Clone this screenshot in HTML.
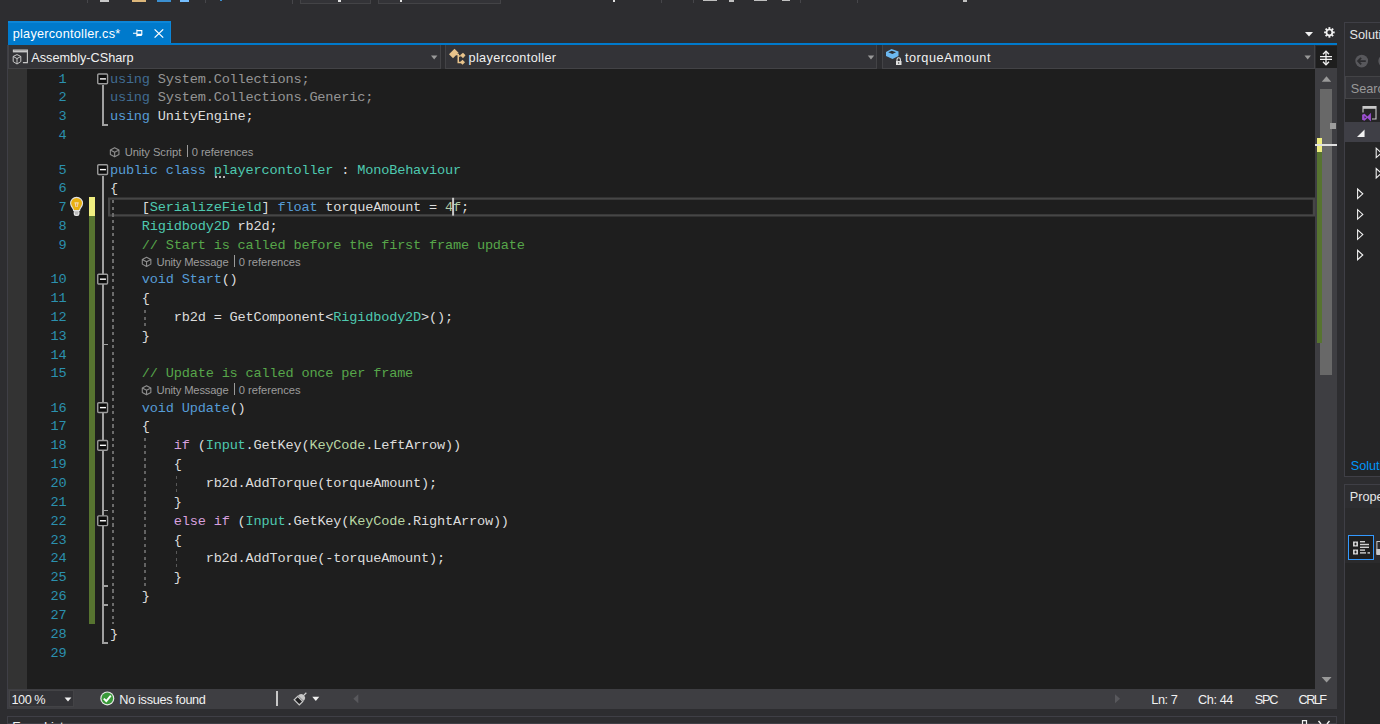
<!DOCTYPE html>
<html><head><meta charset="utf-8"><title>playercontoller.cs</title>
<style>
html,body{margin:0;padding:0;}
body{width:1380px;height:724px;overflow:hidden;background:#2d2d30;position:relative;font-family:"Liberation Sans",sans-serif;font-size:12px;color:#f1f1f1;}
.a{position:absolute;}
svg{overflow:visible}
.ui{position:absolute;white-space:nowrap;font-family:"Liberation Sans",sans-serif;line-height:16px;height:16px;}
.ln,.cl{position:absolute;white-space:pre;font-family:"Liberation Mono",monospace;font-size:13.6px;line-height:16px;height:16px;letter-spacing:-0.18px;}
.ln{color:#2b91af;text-align:right;left:27px;width:39.4px;}
.cl{color:#dcdcdc;left:109.95px;}
.k{color:#569cd6}.t{color:#4ec9b0}.g{color:#57a64a}.n{color:#b5cea8}.e{color:#b8d7a3}.c{color:#d8a0df}.u{color:#569cd6}
.box{position:absolute;width:9px;height:9px;border:1px solid #a5a5a5;background:#1e1e1e;}
.box:after{content:"";position:absolute;left:2px;top:4px;width:5px;height:1px;background:#f0f0f0;}
.gd{position:absolute;width:2px;background:repeating-linear-gradient(to bottom,var(--c) 0,var(--c) 3.3px,transparent 3.3px,transparent 6.6px);}
</style></head><body>

<div class="a" style="left:87px;top:0px;width:1px;height:3px;background:#46464a;"></div>
<div class="a" style="left:100px;top:0px;width:9px;height:1.5px;background:#c8c8c8;"></div>
<div class="a" style="left:132px;top:0px;width:14px;height:2px;background:#dcb67a;"></div>
<div class="a" style="left:157px;top:0px;width:14px;height:1.5px;background:#3b8fd0;"></div>
<div class="a" style="left:180px;top:0px;width:9px;height:2px;background:#75beff;"></div>
<div class="a" style="left:205px;top:0px;width:1px;height:3px;background:#46464a;"></div>
<div class="a" style="left:220px;top:0px;width:2px;height:1px;background:#3b8fd0;"></div>
<div class="a" style="left:292px;top:0px;width:1px;height:4px;background:#46464a;"></div>
<div class="a" style="left:299.5px;top:-1px;width:71px;height:5px;background:#333337;border:1px solid #434346;box-sizing:border-box"></div>
<div class="a" style="left:378px;top:-1px;width:122.5px;height:5px;background:#333337;border:1px solid #434346;box-sizing:border-box"></div>
<div class="a" style="left:338px;top:0px;width:3px;height:1.5px;background:#e0e0e0;"></div>
<div class="a" style="left:400px;top:0px;width:2px;height:1.5px;background:#e0e0e0;"></div>
<div class="a" style="left:613px;top:0px;width:2px;height:1.5px;background:#e0e0e0;"></div>
<div class="a" style="left:661px;top:0px;width:1px;height:3px;background:#46464a;"></div>
<div class="a" style="left:693px;top:0px;width:1px;height:3px;background:#46464a;"></div>
<div class="a" style="left:703px;top:0px;width:14px;height:1px;background:#c0c0c0;"></div>
<div class="a" style="left:729px;top:0px;width:5px;height:2px;background:#c0c0c0;"></div>
<div class="a" style="left:754px;top:0px;width:13px;height:1px;background:#c0c0c0;"></div>
<div class="a" style="left:782px;top:0px;width:8px;height:1px;background:#c0c0c0;"></div>
<div class="a" style="left:800px;top:0px;width:1px;height:3px;background:#46464a;"></div>
<div class="a" style="left:857px;top:0px;width:1px;height:3px;background:#46464a;"></div>
<div class="a" style="left:963px;top:0px;width:4px;height:2px;background:#c0c0c0;"></div>
<div class="a" style="left:8px;top:21px;width:163px;height:22px;background:#007acc;"></div>
<div class="a" style="left:8px;top:21px;width:163px;height:1.6px;background:#0c86d8;"></div>
<div class="a" style="left:170px;top:21px;width:1px;height:22px;background:#0c86d8;"></div>
<div class="ui" style="left:12.7px;top:26px;font-size:12.7px;letter-spacing:0.255px;color:#ffffff;">playercontoller.cs*</div>
<svg class="a" style="left:133px;top:29px;" width="10" height="9" viewBox="0 0 10 9"><path d="M0 4.3H3.8 M3.9 0.6V7.6 M3.9 1.6H8.8V6.1 M3.9 5.3H8.8 M3.9 6.4H8.8" fill="none" stroke="#fff" stroke-width="1.1"/></svg>
<svg class="a" style="left:154px;top:29px;" width="10" height="9" viewBox="0 0 10 9"><path d="M0.6 0.4L9.2 8.6M9.2 0.4L0.6 8.6" fill="none" stroke="#fff" stroke-width="1.3"/></svg>
<svg class="a" style="left:1305px;top:32px;" width="8" height="5" viewBox="0 0 8 5"><path d="M0 0H8L4 4.6Z" fill="#f1f1f1"/></svg>
<svg class="a" style="left:1324px;top:27px;" width="10.8" height="10.8" viewBox="-5.4 -5.4 10.8 10.8"><circle r="2.9" fill="none" stroke="#f1f1f1" stroke-width="1.7"/><path d="M0 -3.4V-5.3" stroke="#f1f1f1" stroke-width="1.9" transform="rotate(0)"/><path d="M0 -3.4V-5.3" stroke="#f1f1f1" stroke-width="1.9" transform="rotate(45)"/><path d="M0 -3.4V-5.3" stroke="#f1f1f1" stroke-width="1.9" transform="rotate(90)"/><path d="M0 -3.4V-5.3" stroke="#f1f1f1" stroke-width="1.9" transform="rotate(135)"/><path d="M0 -3.4V-5.3" stroke="#f1f1f1" stroke-width="1.9" transform="rotate(180)"/><path d="M0 -3.4V-5.3" stroke="#f1f1f1" stroke-width="1.9" transform="rotate(225)"/><path d="M0 -3.4V-5.3" stroke="#f1f1f1" stroke-width="1.9" transform="rotate(270)"/><path d="M0 -3.4V-5.3" stroke="#f1f1f1" stroke-width="1.9" transform="rotate(315)"/></svg>
<div class="a" style="left:8px;top:43px;width:1329px;height:2px;background:#007acc;"></div>
<div class="a" style="left:8px;top:45px;width:433px;height:23.5px;background:#333337;border:1px solid #434346;border-top:none;box-sizing:border-box"></div>
<div class="a" style="left:445px;top:45px;width:432px;height:23.5px;background:#333337;border:1px solid #434346;border-top:none;box-sizing:border-box"></div>
<div class="a" style="left:881.5px;top:45px;width:433.5px;height:23.5px;background:#333337;border:1px solid #434346;border-top:none;box-sizing:border-box"></div>
<div class="ui" style="left:31.3px;top:50px;font-size:12.7px;letter-spacing:0.004px;color:#f1f1f1;">Assembly-CSharp</div>
<div class="ui" style="left:468.5px;top:50px;font-size:12.7px;letter-spacing:0.361px;color:#f1f1f1;">playercontoller</div>
<div class="ui" style="left:905px;top:50px;font-size:12.7px;letter-spacing:0.519px;color:#f1f1f1;">torqueAmount</div>
<svg class="a" style="left:431px;top:55px;" width="6.4" height="3.8" viewBox="0 -6 64 38"><path d="M0 0H64L32 38Z" fill="#999"/></svg>
<svg class="a" style="left:867px;top:55px;" width="6.4" height="3.8" viewBox="-8 -6 64 38"><path d="M0 0H64L32 38Z" fill="#999"/></svg>
<svg class="a" style="left:1304px;top:55px;" width="6.4" height="3.8" viewBox="-5 -6 64 38"><path d="M0 0H64L32 38Z" fill="#999"/></svg>
<svg class="a" style="left:12px;top:49px;" width="16" height="16" viewBox="-0.4 0 16 16"><path d="M1 3.2V1h14v12.6h-4.5" fill="none" stroke="#c8c8c8" stroke-width="1.1"/><path d="M1 2.4h14" stroke="#c8c8c8" stroke-width="2"/><path d="M4.6 5.6L8.4 7.4V12.6L4.6 15L0.8 12.6V7.4Z M0.8 7.4L4.6 9.6L8.4 7.4M4.6 9.6V15" fill="none" stroke="#c8c8c8" stroke-width="1"/></svg>
<svg class="a" style="left:449px;top:48px;" width="16.5" height="16.5" viewBox="0 -7 165 165"><g fill="#e8c38b"><path d="M0 55L55 0L95 40L40 95Z"/><path d="M110 65L140 40L165 65L140 95Z"/><path d="M110 135L135 110L160 135L135 160Z"/><path d="M70 50H100V65H115V80H100V130H120V145H85V65H70Z"/></g></svg>
<svg class="a" style="left:886px;top:48px;" width="17" height="17" viewBox="0 -5 170 170"><path d="M0 35L55 5L125 30L125 75L65 105L0 75Z" fill="#6cb8f0"/><path d="M22 38L58 22L100 37L64 55Z" fill="#2d2d30"/><path d="M100 125h55v40h-55z" fill="#e0e0e0"/><path d="M110 125v-15a17 17 0 0 1 34 0v15" fill="none" stroke="#e0e0e0" stroke-width="11"/><rect x="122" y="138" width="10" height="14" fill="#333"/></svg>
<div class="a" style="left:1316px;top:46px;width:21px;height:22.5px;background:#1e1e1e;"></div>
<svg class="a" style="left:1320px;top:51px;" width="12" height="14" viewBox="0 0 12 14"><path d="M0 5.6H12M0 8.4H12" stroke="#f1f1f1" stroke-width="1.3"/><path d="M6 0.4V13.6" stroke="#f1f1f1" stroke-width="1.3"/><path d="M3 3.2L6 0.2L9 3.2M3 10.8L6 13.8L9 10.8" fill="none" stroke="#f1f1f1" stroke-width="1.3"/></svg>
<div class="a" style="left:7px;top:45px;width:1px;height:664px;background:#3f3f46;"></div>
<div class="a" style="left:8px;top:68.5px;width:1308px;height:620.5px;background:#1e1e1e;"></div>
<div class="a" style="left:8px;top:68.5px;width:19px;height:620.5px;background:#333333;"></div>
<svg class="a" style="left:108px;top:197px;" width="1207" height="19" viewBox="0 -0.5 1207 19"><rect x="1.1" y="1.1" width="1204.8" height="16.8" fill="none" stroke="#464646" stroke-width="2.2"/></svg>
<div class="a" style="left:89px;top:197px;width:6px;height:19px;background:#efee80;"></div>
<div class="a" style="left:89px;top:216px;width:6px;height:408px;background:#577430;"></div>
<div class="a" style="left:102.2px;top:85.1px;width:1.9px;height:39.93px;background:#a0a0a0;"></div>
<div class="a" style="left:102.2px;top:124.13px;width:6px;height:1.5px;background:#a0a0a0;"></div>
<div class="a" style="left:102.2px;top:175.81px;width:1.9px;height:467.48px;background:#a0a0a0;"></div>
<div class="a" style="left:102.2px;top:642.39px;width:6px;height:1.5px;background:#a0a0a0;"></div>
<div class="a" style="left:102.2px;top:343.62px;width:6px;height:1.5px;background:#a0a0a0;"></div>
<div class="a" style="left:102.2px;top:509.77px;width:6px;height:1.5px;background:#a0a0a0;"></div>
<div class="a" style="left:102.2px;top:585.21px;width:6px;height:1.5px;background:#a0a0a0;"></div>
<div class="a" style="left:102.2px;top:604.07px;width:6px;height:1.5px;background:#a0a0a0;"></div>
<svg class="a" style="left:97px;top:73px;" width="11.2" height="11.2" viewBox="-0.05 -0.3 11.2 11.2"><rect x="0.7" y="0.7" width="9.8" height="9.8" rx="1" fill="#0c0c0c" stroke="#9c9c9c" stroke-width="1.4"/><rect x="2.9" y="4.9" width="6" height="1.4" fill="#ffffff"/></svg>
<svg class="a" style="left:97px;top:164px;" width="11.2" height="11.2" viewBox="-0.05 -0.01 11.2 11.2"><rect x="0.7" y="0.7" width="9.8" height="9.8" rx="1" fill="#0c0c0c" stroke="#9c9c9c" stroke-width="1.4"/><rect x="2.9" y="4.9" width="6" height="1.4" fill="#ffffff"/></svg>
<svg class="a" style="left:97px;top:273px;" width="11.2" height="11.2" viewBox="-0.05 -0.58 11.2 11.2"><rect x="0.7" y="0.7" width="9.8" height="9.8" rx="1" fill="#0c0c0c" stroke="#9c9c9c" stroke-width="1.4"/><rect x="2.9" y="4.9" width="6" height="1.4" fill="#ffffff"/></svg>
<svg class="a" style="left:97px;top:402px;" width="11.2" height="11.2" viewBox="-0.05 -0.01 11.2 11.2"><rect x="0.7" y="0.7" width="9.8" height="9.8" rx="1" fill="#0c0c0c" stroke="#9c9c9c" stroke-width="1.4"/><rect x="2.9" y="4.9" width="6" height="1.4" fill="#ffffff"/></svg>
<svg class="a" style="left:97px;top:439px;" width="11.2" height="11.2" viewBox="-0.05 -0.73 11.2 11.2"><rect x="0.7" y="0.7" width="9.8" height="9.8" rx="1" fill="#0c0c0c" stroke="#9c9c9c" stroke-width="1.4"/><rect x="2.9" y="4.9" width="6" height="1.4" fill="#ffffff"/></svg>
<svg class="a" style="left:97px;top:515px;" width="11.2" height="11.2" viewBox="-0.05 -0.17 11.2 11.2"><rect x="0.7" y="0.7" width="9.8" height="9.8" rx="1" fill="#0c0c0c" stroke="#9c9c9c" stroke-width="1.4"/><rect x="2.9" y="4.9" width="6" height="1.4" fill="#ffffff"/></svg>
<div class="gd" style="--c:#6c6c6c;width:2px;left:112.05px;top:200.13px;height:423.7px"></div>
<div class="gd" style="--c:#626262;width:2px;left:143.97px;top:309.7px;height:15.96px"></div>
<div class="gd" style="--c:#626262;width:2px;left:143.97px;top:438.13px;height:147.98px"></div>
<div class="gd" style="--c:#585858;width:1.5px;left:175.89px;top:475.85px;height:15.96px"></div>
<div class="gd" style="--c:#585858;width:1.5px;left:175.89px;top:551.29px;height:15.96px"></div>
<div class="ln" style="top:72.00px">1</div>
<div class="cl" style="top:72.00px;opacity:.62"><span class="k">using</span> System.Collections;</div>
<div class="ln" style="top:90.00px">2</div>
<div class="cl" style="top:90.00px;opacity:.62"><span class="k">using</span> System.Collections.Generic;</div>
<div class="ln" style="top:109.00px">3</div>
<div class="cl" style="top:109.00px"><span class="k">using</span> UnityEngine;</div>
<div class="ln" style="top:128.00px">4</div>
<div class="ln" style="top:163.00px">5</div>
<div class="cl" style="top:163.00px"><span class="k">public class </span><span class="t">playercontoller</span> : <span class="t">MonoBehaviour</span></div>
<svg class="a" style="left:109px;top:147px;" width="9.8" height="10.2" viewBox="-7.5 -1.5 98 102"><path d="M49 5L92 28V74L49 97L6 74V28Z M6 28L49 51L92 28 M49 51V97" fill="none" stroke="#8e8e8e" stroke-width="11" stroke-linejoin="round"/></svg>
<div class="ui" style="left:124.65px;top:144px;font-size:11.2px;letter-spacing:-0.047px;color:#9c9c9c;">Unity Script</div>
<div class="a" style="left:186.65px;top:144.95px;width:1px;height:12.4px;background:#9a9a9a;"></div>
<div class="ui" style="left:191.65px;top:144px;font-size:11.2px;letter-spacing:-0.039px;color:#9c9c9c;">0 references</div>
<div class="ln" style="top:181.00px">6</div>
<div class="cl" style="top:181.00px">{</div>
<div class="ln" style="top:200.00px">7</div>
<div class="cl" style="top:200.00px">    [<span class="t">SerializeField</span>] <span class="k">float</span> torqueAmount = <span class="n">4f</span>;</div>
<div class="ln" style="top:219.00px">8</div>
<div class="cl" style="top:219.00px">    <span class="t">Rigidbody2D</span> rb2d;</div>
<div class="ln" style="top:238.00px">9</div>
<div class="cl" style="top:238.00px">    <span class="g">// Start is called before the first frame update</span></div>
<div class="ln" style="top:272.00px">10</div>
<div class="cl" style="top:272.00px">    <span class="k">void </span><span class="u">Start</span>()</div>
<svg class="a" style="left:141px;top:256px;" width="9.8" height="10.2" viewBox="-6.7 -7.2 98 102"><path d="M49 5L92 28V74L49 97L6 74V28Z M6 28L49 51L92 28 M49 51V97" fill="none" stroke="#8e8e8e" stroke-width="11" stroke-linejoin="round"/></svg>
<div class="ui" style="left:156.57px;top:254px;font-size:11.2px;letter-spacing:-0.16px;color:#9c9c9c;">Unity Message</div>
<div class="a" style="left:233.87px;top:254.52px;width:1px;height:12.4px;background:#9a9a9a;"></div>
<div class="ui" style="left:238.87px;top:254px;font-size:11.2px;letter-spacing:-0.039px;color:#9c9c9c;">0 references</div>
<div class="ln" style="top:291.00px">11</div>
<div class="cl" style="top:291.00px">    {</div>
<div class="ln" style="top:310.00px">12</div>
<div class="cl" style="top:310.00px">        rb2d = GetComponent&lt;<span class="t">Rigidbody2D</span>&gt;();</div>
<div class="ln" style="top:329.00px">13</div>
<div class="cl" style="top:329.00px">    }</div>
<div class="ln" style="top:348.00px">14</div>
<div class="ln" style="top:366.00px">15</div>
<div class="cl" style="top:366.00px">    <span class="g">// Update is called once per frame</span></div>
<div class="ln" style="top:401.00px">16</div>
<div class="cl" style="top:401.00px">    <span class="k">void </span><span class="u">Update</span>()</div>
<svg class="a" style="left:141px;top:385px;" width="9.8" height="10.2" viewBox="-6.7 -1.5 98 102"><path d="M49 5L92 28V74L49 97L6 74V28Z M6 28L49 51L92 28 M49 51V97" fill="none" stroke="#8e8e8e" stroke-width="11" stroke-linejoin="round"/></svg>
<div class="ui" style="left:156.57px;top:382px;font-size:11.2px;letter-spacing:-0.16px;color:#9c9c9c;">Unity Message</div>
<div class="a" style="left:233.87px;top:382.95px;width:1px;height:12.4px;background:#9a9a9a;"></div>
<div class="ui" style="left:238.87px;top:382px;font-size:11.2px;letter-spacing:-0.039px;color:#9c9c9c;">0 references</div>
<div class="ln" style="top:419.00px">17</div>
<div class="cl" style="top:419.00px">    {</div>
<div class="ln" style="top:438.00px">18</div>
<div class="cl" style="top:438.00px">        <span class="c">if</span> (<span class="t">Input</span>.GetKey(<span class="e">KeyCode</span>.LeftArrow))</div>
<div class="ln" style="top:457.00px">19</div>
<div class="cl" style="top:457.00px">        {</div>
<div class="ln" style="top:476.00px">20</div>
<div class="cl" style="top:476.00px">            rb2d.AddTorque(torqueAmount);</div>
<div class="ln" style="top:495.00px">21</div>
<div class="cl" style="top:495.00px">        }</div>
<div class="ln" style="top:514.00px">22</div>
<div class="cl" style="top:514.00px">        <span class="c">else if</span> (<span class="t">Input</span>.GetKey(<span class="e">KeyCode</span>.RightArrow))</div>
<div class="ln" style="top:533.00px">23</div>
<div class="cl" style="top:533.00px">        {</div>
<div class="ln" style="top:551.00px">24</div>
<div class="cl" style="top:551.00px">            rb2d.AddTorque(-torqueAmount);</div>
<div class="ln" style="top:570.00px">25</div>
<div class="cl" style="top:570.00px">        }</div>
<div class="ln" style="top:589.00px">26</div>
<div class="cl" style="top:589.00px">    }</div>
<div class="ln" style="top:608.00px">27</div>
<div class="ln" style="top:627.00px">28</div>
<div class="cl" style="top:627.00px">}</div>
<div class="ln" style="top:646.00px">29</div>
<div class="a" style="left:214.8px;top:175.8px;width:2.2px;height:1.8px;background:#b4b4b4;"></div>
<div class="a" style="left:219px;top:175.8px;width:2.2px;height:1.8px;background:#b4b4b4;"></div>
<div class="a" style="left:223.2px;top:175.8px;width:2.2px;height:1.8px;background:#b4b4b4;"></div>
<svg class="a" style="left:452px;top:197px;" width="2" height="17.8" viewBox="-0.09 -0.8 2 17.8"><rect x="0" y="0" width="2" height="17.8" fill="#c8c8c8"/></svg>
<svg class="a" style="left:70px;top:196px;" width="13.2" height="19.8" viewBox="0 -0.8 13.2 19.8"><path d="M6.6 0.6C3.2 0.6 0.6 3.2 0.6 6.5C0.6 8.6 1.7 10 2.7 11.3C3.3 12.1 3.6 12.8 3.6 13.8H9.6C9.6 12.8 9.9 12.1 10.5 11.3C11.5 10 12.6 8.6 12.6 6.5C12.6 3.2 10 0.6 6.6 0.6Z" fill="#eab010" stroke="#e2e2e2" stroke-width="1.1"/><path d="M4.4 5.4H8.8L7.7 10.2H5.5Z" fill="#f3dcaa"/><path d="M6 6.6V9.6H7.2V6.6Z" fill="#eea24a"/><rect x="3.7" y="13.6" width="5.8" height="5.6" rx="2.2" fill="#e6e6e6"/><path d="M4.6 15.3H8.6M5 17.1H8.2" stroke="#8c8c8c" stroke-width="0.8"/></svg>
<div class="a" style="left:1315px;top:68px;width:22px;height:621px;background:#3e3e42;"></div>
<div class="a" style="left:1320px;top:88.5px;width:12px;height:286.5px;background:#686868;"></div>
<div class="a" style="left:1317px;top:152px;width:4.7px;height:190.6px;background:#577430;"></div>
<div class="a" style="left:1317px;top:137.8px;width:4.7px;height:14.2px;background:#efee80;"></div>
<div class="a" style="left:1330px;top:123px;width:6.4px;height:6.4px;background:#9d9d9d;"></div>
<div class="a" style="left:1315px;top:143.6px;width:22px;height:2.2px;background:#e0e0e0;"></div>
<svg class="a" style="left:1321px;top:76px;" width="9.4" height="5.4" viewBox="-8 -3 94 54"><path d="M0 54L47 0L94 54Z" fill="#999"/></svg>
<svg class="a" style="left:1321px;top:676px;" width="10" height="5.6" viewBox="-6 -9 100 56"><path d="M0 0H100L50 56Z" fill="#999"/></svg>
<div class="a" style="left:8px;top:689px;width:1329px;height:20px;background:#3e3e42;"></div>
<div class="a" style="left:8.8px;top:690px;width:65px;height:17px;background:#333337;border:1px solid #434346;box-sizing:border-box"></div>
<div class="ui" style="left:11.5px;top:692px;font-size:12.7px;letter-spacing:-0.482px;color:#f1f1f1;">100 %</div>
<svg class="a" style="left:64px;top:697px;" width="6.8" height="3.8" viewBox="-6 -6 68 38"><path d="M0 0H68L34 38Z" fill="#f1f1f1"/></svg>
<svg class="a" style="left:100px;top:691px;" width="14.6" height="14.6" viewBox="0 -1 146 146"><circle cx="73" cy="73" r="70" fill="#e8e8e8"/><circle cx="73" cy="73" r="58" fill="#3a9a3a"/><path d="M38 75L63 99L108 46" fill="none" stroke="#fff" stroke-width="19"/></svg>
<div class="ui" style="left:119.3px;top:692px;font-size:12.7px;letter-spacing:-0.311px;color:#f1f1f1;">No issues found</div>
<div class="a" style="left:276.3px;top:691px;width:1.5px;height:15px;background:#c8c8c8;"></div>
<svg class="a" style="left:300px;top:698px;" width="1" height="1" viewBox="-0.4 -0.7 1 1"><g transform="rotate(45)"><path d="M0 -8.4V-4" stroke="#d0d0d0" stroke-width="1.2" fill="none"/><path d="M-4 -0.6Q-4 -4.8 0 -4.8Q4 -4.8 4 -0.6Z" fill="#c8c8c8"/><rect x="-3.6" y="0.2" width="7.2" height="5" fill="#222224" stroke="#c8c8c8" stroke-width="1.2"/></g></svg>
<svg class="a" style="left:312px;top:696px;" width="7" height="4.2" viewBox="-3 -8 70 42"><path d="M0 0H70L35 42Z" fill="#f1f1f1"/></svg>
<svg class="a" style="left:353px;top:694px;" width="5" height="9" viewBox="-3 -3 50 90"><path d="M50 0V90L0 45Z" fill="#58585c"/></svg>
<svg class="a" style="left:1115px;top:694px;" width="5" height="9" viewBox="0 -3 50 90"><path d="M0 0V90L50 45Z" fill="#58585c"/></svg>
<div class="ui" style="left:1151.3px;top:692px;font-size:12.7px;letter-spacing:-0.449px;color:#f1f1f1;">Ln: 7</div>
<div class="ui" style="left:1198px;top:692px;font-size:12.7px;letter-spacing:-0.403px;color:#f1f1f1;">Ch: 44</div>
<div class="ui" style="left:1254.8px;top:692px;font-size:12.7px;letter-spacing:-1.238px;color:#f1f1f1;">SPC</div>
<div class="ui" style="left:1298.6px;top:692px;font-size:12.7px;letter-spacing:-1.541px;color:#f1f1f1;">CRLF</div>
<div class="a" style="left:7.2px;top:716.3px;width:1330px;height:8px;background:#2d2d30;border:1px solid #3f3f46;box-sizing:border-box"></div>
<div class="ui" style="left:12.2px;top:719px;font-size:12.7px;letter-spacing:0px;color:#f1f1f1;">Error List</div>
<svg class="a" style="left:1301px;top:720px;" width="6" height="4" viewBox="-0.5 -0.6 6 4"><path d="M1 0H5V4H1Z" fill="none" stroke="#f1f1f1" stroke-width="1.2"/></svg>
<svg class="a" style="left:1318px;top:721px;" width="12" height="3" viewBox="0 0 12 3"><path d="M0.5 0L3 3M11.5 0L9 3" stroke="#f1f1f1" stroke-width="1.4"/></svg>
<div class="a" style="left:1344px;top:21.5px;width:40px;height:455px;background:#2d2d30;border:1px solid #3f3f46;box-sizing:border-box"></div>
<div class="ui" style="left:1349.6px;top:27px;font-size:12.7px;letter-spacing:0px;color:#e6e6e6;">Solution Explorer</div>
<svg class="a" style="left:1355px;top:54px;" width="13.4" height="13.4" viewBox="0 -4 134 134"><circle cx="67" cy="67" r="64" fill="#58585c"/><path d="M108 67H32M62 34L30 67L62 100" fill="none" stroke="#2d2d30" stroke-width="17"/></svg>
<svg class="a" style="left:1378px;top:54px;" width="13.4" height="13.4" viewBox="0 -4 134 134"><circle cx="67" cy="67" r="64" fill="#58585c"/></svg>
<div class="a" style="left:1345px;top:76.3px;width:40px;height:22.5px;background:#333337;border:1px solid #434346;box-sizing:border-box"></div>
<div class="ui" style="left:1350.7px;top:81px;font-size:12.7px;letter-spacing:0px;color:#999999;">Search Solution</div>
<div class="a" style="left:1345px;top:99px;width:36px;height:377px;background:#252526;"></div>
<div class="a" style="left:1345px;top:122px;width:36px;height:20.3px;background:#3f3f46;"></div>
<svg class="a" style="left:1361px;top:105px;" width="16" height="16" viewBox="-0.5 -0.5 16 16"><path d="M1.5 7V1h13v12.5h-4" fill="none" stroke="#c8c8c8" stroke-width="1.1"/><path d="M1.5 2.2h13" stroke="#c8c8c8" stroke-width="2.2"/><path d="M0.6 9.2L3 8.2L6 11L9.4 7.2V16L6 12.6L3 15.2L0.6 14.2Z M3 10.4V13L4.6 11.7Z" fill="#9b4fd0" fill-rule="evenodd"/></svg>
<svg class="a" style="left:1357px;top:129px;" width="7.6" height="7.4" viewBox="0 -6 76 74"><path d="M76 0V74H0Z" fill="#f1f1f1"/></svg>
<svg class="a" style="left:1375px;top:147px;" width="6.4" height="11" viewBox="-6 -4 64 110"><path d="M6 8V102L58 55Z" fill="none" stroke="#f1f1f1" stroke-width="11"/></svg>
<svg class="a" style="left:1375px;top:167px;" width="6.4" height="11" viewBox="-6 -8 64 110"><path d="M6 8V102L58 55Z" fill="none" stroke="#f1f1f1" stroke-width="11"/></svg>
<svg class="a" style="left:1357px;top:188px;" width="6.4" height="11" viewBox="0 -3 64 110"><path d="M6 8V102L58 55Z" fill="none" stroke="#f1f1f1" stroke-width="11"/></svg>
<svg class="a" style="left:1357px;top:208px;" width="6.4" height="11" viewBox="0 -9 64 110"><path d="M6 8V102L58 55Z" fill="none" stroke="#f1f1f1" stroke-width="11"/></svg>
<svg class="a" style="left:1357px;top:229px;" width="6.4" height="11" viewBox="0 -1 64 110"><path d="M6 8V102L58 55Z" fill="none" stroke="#f1f1f1" stroke-width="11"/></svg>
<svg class="a" style="left:1357px;top:249px;" width="6.4" height="11" viewBox="0 -5 64 110"><path d="M6 8V102L58 55Z" fill="none" stroke="#f1f1f1" stroke-width="11"/></svg>
<div class="ui" style="left:1350.7px;top:458px;font-size:12.7px;letter-spacing:0px;color:#0097fb;">Solution Explorer</div>
<div class="a" style="left:1344px;top:484.3px;width:40px;height:245px;background:#252526;border:1px solid #3f3f46;box-sizing:border-box"></div>
<div class="a" style="left:1345px;top:485.3px;width:40px;height:22.7px;background:#2d2d30;"></div>
<div class="a" style="left:1345px;top:508px;width:40px;height:55px;background:#2a2a2c;"></div>
<div class="ui" style="left:1349.7px;top:489px;font-size:12.7px;letter-spacing:0px;color:#e6e6e6;">Properties</div>
<div class="a" style="left:1348px;top:535px;width:26px;height:25.4px;background:#1e1e1e;border:1px solid #3399ff;box-sizing:border-box"></div>
<svg class="a" style="left:1353px;top:541px;" width="17" height="14" viewBox="0 0 17 14"><g fill="#d0d0d0"><rect x="0" y="0.5" width="5" height="5"/><rect x="0" y="8.5" width="5" height="5"/><rect x="7" y="0" width="5" height="1.4"/><rect x="7" y="2.8" width="9" height="1.4"/><rect x="7" y="5.6" width="9" height="1.4"/><rect x="7" y="8.4" width="5" height="1.4"/><rect x="7" y="11.2" width="6" height="1.4"/><rect x="14.5" y="11.2" width="2.5" height="1.4"/></g><path d="M1.2 3H3.8M2.5 1.7V4.3M1.2 11H3.8M2.5 9.7V12.3" stroke="#1e1e1e" stroke-width="0.9"/></svg>
<svg class="a" style="left:1376px;top:541px;" width="8" height="16" viewBox="-0.4 0 8 16"><rect x="0.5" y="0.5" width="9" height="12" fill="none" stroke="#c8c8c8"/><path d="M0 8h4v6H0z" fill="#c8c8c8"/></svg>
</body></html>
